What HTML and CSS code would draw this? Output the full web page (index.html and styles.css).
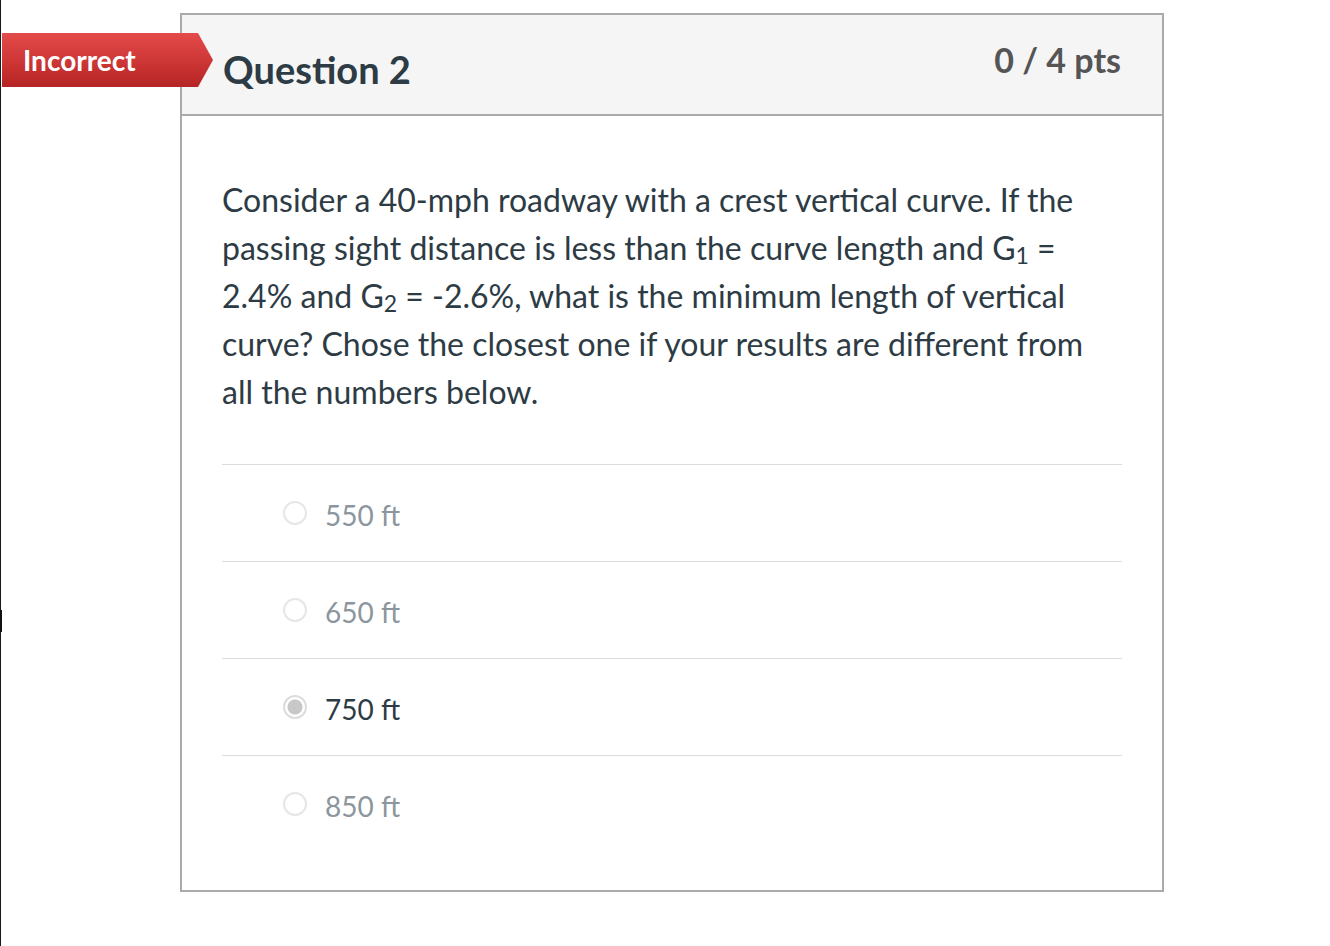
FILE: index.html
```html
<!DOCTYPE html>
<html>
<head>
<meta charset="utf-8">
<link rel="stylesheet" href="styles.css">
</head>
<body>
<div class="page">
  <div class="edge"><span class="edge-mark"></span></div>
  <div class="quiz">
    <div class="badge">Incorrect</div>
    <div class="card">
      <div class="card-header">
        <h2 class="title">Question 2</h2>
        <div class="pts">0 / 4 pts</div>
      </div>
      <div class="card-body">
        <p class="question">Consider a 40-mph roadway with a crest vertical curve. If the passing sight distance is less than the curve length and G<sub>1</sub> = 2.4% and G<sub>2</sub> = -2.6%, what is the minimum length of vertical curve? Chose the closest one if your results are different from all the numbers below.</p>
        <ul class="answers">
          <li class="answer"><span class="radio"></span><span class="label">550 ft</span></li>
          <li class="answer"><span class="radio"></span><span class="label">650 ft</span></li>
          <li class="answer selected"><span class="radio"></span><span class="label">750 ft</span></li>
          <li class="answer"><span class="radio"></span><span class="label">850 ft</span></li>
        </ul>
      </div>
    </div>
  </div>
</div>
</body>
</html>
```

FILE: styles.css
```css
html, body {
  margin: 0;
  padding: 0;
  background: #fff;
}
body {
  font-family: Lato, "Open Sans", sans-serif;
  color: #2d3b45;
}
.page {
  display: flex;
  min-height: 946px;
}
.edge {
  width: 1px;
  background: #1a1a1a;
  position: relative;
  flex: none;
}
.edge-mark {
  position: absolute;
  left: 0;
  top: 610px;
  width: 2px;
  height: 22px;
  background: #111;
}
.quiz {
  position: relative;
  padding-left: 179px;
  padding-top: 13px;
}
.badge {
  position: absolute;
  left: 1px;
  top: 33px;
  width: 211px;
  height: 54px;
  box-sizing: border-box;
  padding-left: 21px;
  line-height: 54px;
  font-size: 28px;
  font-weight: 700;
  color: #fff;
  background: linear-gradient(#e44b4b, #c5302f 70%, #b52525);
  clip-path: polygon(0 0, 196px 0, 211px 27px, 196px 54px, 0 54px);
  z-index: 2;
}
.card {
  width: 984px;
  height: 879px;
  box-sizing: border-box;
  border: 2px solid #aaaaaa;
}
.card-header {
  height: 101px;
  box-sizing: border-box;
  background: #f5f5f5;
  border-bottom: 2px solid #aaaaaa;
  display: flex;
  justify-content: space-between;
  padding: 0 41px 0 41px;
}
.title {
  margin: 0;
  padding-top: 32px;
  font-size: 38px;
  font-weight: 700;
  line-height: 44px;
  color: #2d3b45;
}
.pts {
  padding-top: 25px;
  font-size: 34px;
  font-weight: 700;
  line-height: 40px;
  color: #555;
}
.card-body {
  padding: 60px 40px 0 40px;
}
.question {
  margin: 0;
  font-size: 32px;
  line-height: 48px;
  color: #2d3b45;
}
.question sub {
  font-size: 23px;
  line-height: 0;
  vertical-align: -4px;
}
.answers {
  list-style: none;
  margin: 48px 0 0 0;
  padding: 0;
}
.answer {
  height: 97px;
  box-sizing: border-box;
  border-top: 1px solid #dcdcdc;
  display: flex;
  align-items: center;
  padding-left: 61px;
  gap: 18px;
}
.radio {
  width: 24px;
  height: 24px;
  box-sizing: border-box;
  border-radius: 50%;
  border: 2px solid #e6e6e6;
  background: #fff;
  flex: none;
}
.label {
  font-size: 28px;
  padding-top: 4px;
  color: #8b969e;
}
.answer.selected .radio {
  border: 2px solid #dcdcdc;
  background: radial-gradient(circle, #c8c8c8 0 7px, #fff 8px);
}
.answer.selected .label {
  color: #2d3b45;
}
```
